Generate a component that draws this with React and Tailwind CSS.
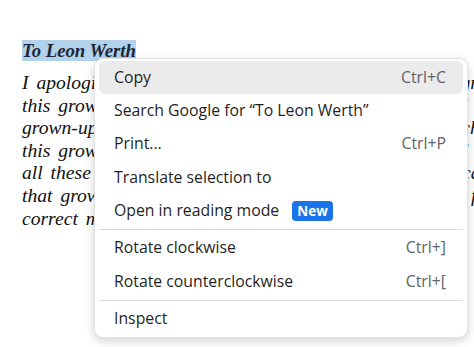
const lines = [
  "I apologize to children for dedicating this book to a grown-up. I have a serious excuse:",
  "this grown-up is the best friend I have in the world. I have another excuse: this",
  "grown-up can understand everything, even books for children. I have a third excuse:",
  "this grown-up lives in France where he is hungry and cold. He needs to be comforted. If",
  "all these excuses are not enough, then I want to dedicate this book to the child",
  "that grown-up once was. All grown-ups were children first. (But few of them remember it.) So I",
  "correct my dedication:",
];

const groups = [
  [
    { label: "Copy", shortcut: "Ctrl+C", active: true },
    { label: "Search Google for \u201cTo Leon Werth\u201d" },
    { label: "Print...", shortcut: "Ctrl+P" },
    { label: "Translate selection to" },
    { label: "Open in reading mode", badge: "New" },
  ],
  [
    { label: "Rotate clockwise", shortcut: "Ctrl+]" },
    { label: "Rotate counterclockwise", shortcut: "Ctrl+[" },
  ],
  [{ label: "Inspect" }],
];

function MenuItem({ item }) {
  return (
    <div
      className={
        "flex h-[33.3px] items-center justify-between rounded-md pl-[15px] pr-[17px] " +
        (item.active ? "bg-[#ebebeb]" : "")
      }
    >
      <div className="flex items-center gap-[13px]">
        <span>{item.label}</span>
        {item.badge && (
          <span className="rounded-[4px] bg-[#1a73e8] px-[5px] text-[13.5px] leading-[20px] font-bold text-white">
            {item.badge}
          </span>
        )}
      </div>
      {item.shortcut && <span className="text-[#5f6368]">{item.shortcut}</span>}
    </div>
  );
}

export default function App() {
  return (
    <div className="relative h-[347px] w-full overflow-hidden bg-white">
      <div className="pt-[40px] pl-[22px] font-['Liberation_Serif',serif] italic text-[#111]">
        <div className="text-[18.7px] leading-[21px] font-bold text-[#1c2636]">
          <span className="bg-[#b2d1ea]">To Leon Werth</span>
        </div>
        <div className="mt-[11px] text-[19.6px] leading-[22.6px] [word-spacing:3px]">
          {lines.map((line) => (
            <div key={line} className="whitespace-nowrap">
              {line}
            </div>
          ))}
        </div>
      </div>

      <div className="absolute top-[58px] left-[94px] w-[374px] rounded-[9px] border border-[#e3e3e3] bg-white px-[4px] pt-[2px] pb-[2px] font-['Open_Sans',sans-serif] text-[15.8px] text-[#1f1f1f] shadow-[0_3px_10px_rgba(0,0,0,0.18)]">
        {groups.map((group, i) => (
          <div key={i}>
            {i > 0 && <div className="my-[1.5px] h-px bg-[#dcdcdc]" />}
            {group.map((item) => (
              <MenuItem key={item.label} item={item} />
            ))}
          </div>
        ))}
      </div>
    </div>
  );
}
